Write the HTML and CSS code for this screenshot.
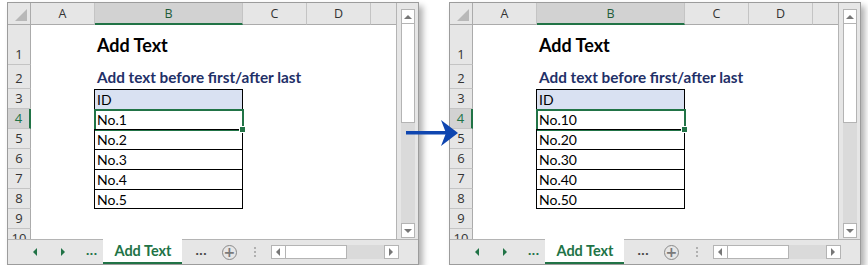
FILE: index.html
```html
<!DOCTYPE html>
<html lang="en">
<head>
<meta charset="UTF-8">
<title>Add Text</title>
<link rel="stylesheet" href="styles.css">
</head>
<body>
<div class="page">

  <div class="win">
    <div class="main">
      <div class="sheet">
        <div class="corner"><span class="tri"></span></div>
        <div class="ch">A</div><div class="ch on">B</div><div class="ch">C</div><div class="ch">D</div><div class="ch end"></div>

        <div class="rh">1</div><div></div><div class="cell title">Add Text</div><div class="rest"></div>
        <div class="rh">2</div><div></div><div class="cell sub">Add text before first/after last</div><div class="rest"></div>
        <div class="rh">3</div><div></div><div class="cell tb head">ID</div><div class="rest"></div>
        <div class="rh on">4</div><div></div><div class="cell tb sel">No.1</div><div class="rest"></div>
        <div class="rh">5</div><div></div><div class="cell tb">No.2</div><div class="rest"></div>
        <div class="rh">6</div><div></div><div class="cell tb">No.3</div><div class="rest"></div>
        <div class="rh">7</div><div></div><div class="cell tb">No.4</div><div class="rest"></div>
        <div class="rh">8</div><div></div><div class="cell tb last">No.5</div><div class="rest"></div>
        <div class="rh">9</div><div></div><div class="cell"></div><div class="rest"></div>
        <div class="rh">10</div><div></div><div class="cell"></div><div class="rest"></div>
      </div>
      <div class="vscroll">
        <div class="sbtn"><span class="up"></span></div>
        <div class="vthumb"></div>
        <div class="vtrack"></div>
        <div class="sbtn"><span class="down"></span></div>
      </div>
    </div>
    <div class="tabs">
      <span class="nav left"></span>
      <span class="nav right"></span>
      <span class="more green">...</span>
      <div class="tab">Add Text</div>
      <span class="more">...</span>
      <span class="plus">+</span>
      <span class="dots"></span>
      <div class="hscroll">
        <div class="hbtn"><span class="left"></span></div>
        <div class="hthumb"></div>
        <div class="htrack"></div>
        <div class="hbtn"><span class="right"></span></div>
      </div>
    </div>
  </div>

  <div class="win">
    <div class="main">
      <div class="sheet">
        <div class="corner"><span class="tri"></span></div>
        <div class="ch">A</div><div class="ch on">B</div><div class="ch">C</div><div class="ch">D</div><div class="ch end"></div>

        <div class="rh">1</div><div></div><div class="cell title">Add Text</div><div class="rest"></div>
        <div class="rh">2</div><div></div><div class="cell sub">Add text before first/after last</div><div class="rest"></div>
        <div class="rh">3</div><div></div><div class="cell tb head">ID</div><div class="rest"></div>
        <div class="rh on">4</div><div></div><div class="cell tb sel">No.10</div><div class="rest"></div>
        <div class="rh">5</div><div></div><div class="cell tb">No.20</div><div class="rest"></div>
        <div class="rh">6</div><div></div><div class="cell tb">No.30</div><div class="rest"></div>
        <div class="rh">7</div><div></div><div class="cell tb">No.40</div><div class="rest"></div>
        <div class="rh">8</div><div></div><div class="cell tb last">No.50</div><div class="rest"></div>
        <div class="rh">9</div><div></div><div class="cell"></div><div class="rest"></div>
        <div class="rh">10</div><div></div><div class="cell"></div><div class="rest"></div>
      </div>
      <div class="vscroll">
        <div class="sbtn"><span class="up"></span></div>
        <div class="vthumb"></div>
        <div class="vtrack"></div>
        <div class="sbtn"><span class="down"></span></div>
      </div>
    </div>
    <div class="tabs">
      <span class="nav left"></span>
      <span class="nav right"></span>
      <span class="more green">...</span>
      <div class="tab">Add Text</div>
      <span class="more">...</span>
      <span class="plus">+</span>
      <span class="dots"></span>
      <div class="hscroll">
        <div class="hbtn"><span class="left"></span></div>
        <div class="hthumb"></div>
        <div class="htrack"></div>
        <div class="hbtn"><span class="right"></span></div>
      </div>
    </div>
  </div>

  <!-- arrow between the two windows -->
  <svg class="arrow" width="62" height="35" viewBox="0 0 62 35">
    <rect x="6" y="16" width="40" height="3.5" fill="#0f46b0"/>
    <polygon points="58,18 41,5 46,18 41,31" fill="#0f46b0"/>
  </svg>
</div>
</body>
</html>
```

FILE: styles.css
```css
body {
    margin: 0;
    background: #fff;
    font-family: Lato, "Open Sans", sans-serif;
}
.page {
    position: relative;
    display: flex;
    gap: 30px;
    padding: 2px 0 0 7px;
}
.win {
    width: 410px;
    height: 261px;
    border: 1px solid #9c9c9c;
    background: #e6e6e6;
    display: flex;
    flex-direction: column;
    box-shadow: 4px 4px 6px rgba(0, 0, 0, 0.3);
}
.main {
    display: flex;
    height: 236px;
}
.sheet {
    width: 389px;
    background: #fff;
    display: grid;
    grid-template-columns: 23px 64px 148px 64px 64px 1fr;
    grid-template-rows: 22px 40px 24px repeat(7, 20px) 1fr;
    overflow: hidden;
    border-right: 1px solid #b4b4b4;
    box-sizing: border-box;
}
.corner {
    background: #e6e6e6;
    border-right: 1px solid #ababab;
    border-bottom: 1px solid #ababab;
    position: relative;
}
.tri {
    position: absolute;
    right: 3px;
    bottom: 3px;
    width: 0;
    height: 0;
    border-left: 12px solid transparent;
    border-bottom: 12px solid #b8b8b8;
}
.ch {
    background: #e6e6e6;
    border-right: 1px solid #c4c4c4;
    border-bottom: 1px solid #ababab;
    font-family: "Open Sans", sans-serif;
    font-size: 12.5px;
    color: #333;
    display: flex;
    align-items: center;
    justify-content: center;
}
.ch.on {
    background: #d2d2d2;
    color: #1e5c3a;
    border-bottom: 2px solid #217346;
}
.ch.end {
    border-right: none;
}
.rh {
    background: #e6e6e6;
    border-right: 1px solid #ababab;
    border-bottom: 1px solid #c4c4c4;
    font-family: "Open Sans", sans-serif;
    font-size: 13px;
    color: #333;
    display: flex;
    align-items: flex-end;
    justify-content: center;
    padding-bottom: 1px;
}
.rh.on {
    background: #d2d2d2;
    color: #217346;
    border-right: 2px solid #217346;
}
.rest {
    grid-column: span 3;
}
.cell {
    font-size: 14px;
    color: #000;
    padding-left: 2px;
    display: flex;
    align-items: center;
    white-space: nowrap;
    position: relative;
}
.title {
    font-size: 18px;
    font-weight: bold;
    align-items: flex-end;
    padding-bottom: 9px;
}
.sub {
    font-size: 15.3px;
    font-weight: bold;
    color: #1f3068;
    align-items: flex-end;
    padding-bottom: 3px;
}
.tb {
    border: 1px solid #000;
    border-bottom: none;
    margin-left: -1px;
}
.tb.last {
    border-bottom: 1px solid #000;
}
.tb.head {
    background: #d9e1f2;
}
.sel::after {
    content: "";
    position: absolute;
    left: -1px;
    top: -1px;
    right: -2px;
    bottom: -2px;
    border: 2px solid #217346;
}
.sel::before {
    content: "";
    position: absolute;
    right: -4px;
    bottom: -4px;
    width: 5px;
    height: 5px;
    background: #217346;
    border: 1px solid #fff;
    z-index: 2;
}
.vscroll {
    flex: 1;
    display: flex;
    flex-direction: column;
    padding: 6px 3px 1px 4px;
}
.sbtn {
    height: 13px;
    background: #fff;
    border: 1px solid #b4b4b4;
    display: flex;
    align-items: center;
    justify-content: center;
}
.vthumb {
    height: 98px;
    background: #fff;
    border: 1px solid #b4b4b4;
    border-top: none;
}
.vtrack {
    flex: 1;
    background: #dadada;
}
.up, .down, .left, .right {
    width: 0;
    height: 0;
}
.up {
    border-left: 4px solid transparent;
    border-right: 4px solid transparent;
    border-bottom: 4px solid #777;
}
.down {
    border-left: 4px solid transparent;
    border-right: 4px solid transparent;
    border-top: 4px solid #777;
}
.left {
    border-top: 4px solid transparent;
    border-bottom: 4px solid transparent;
    border-right: 4px solid #777;
}
.right {
    border-top: 4px solid transparent;
    border-bottom: 4px solid transparent;
    border-left: 4px solid #777;
}
.tabs {
    flex: 1;
    display: flex;
    align-items: center;
    border-top: 1px solid #b4b4b4;
    position: relative;
}
.nav.left {
    margin-left: 25px;
    border-right-color: #217346;
}
.nav.right {
    margin-left: 24px;
    border-left-color: #217346;
}
.more {
    font-weight: bold;
    font-size: 14px;
    color: #444;
    letter-spacing: 0.5px;
    margin-top: -6px;
    margin-left: 13px;
}
.more.green {
    color: #217346;
    margin-left: 21px;
    margin-right: 6px;
}
.tab {
    align-self: stretch;
    width: 79px;
    margin-top: -1px;
    background: #fff;
    border-bottom: 2px solid #217346;
    color: #217346;
    font-weight: bold;
    font-size: 14.5px;
    display: flex;
    align-items: center;
    justify-content: center;
}
.plus {
    margin-left: 15px;
    width: 13px;
    height: 13px;
    border: 1.5px solid #8a8a8a;
    border-radius: 50%;
    color: #7a7a7a;
    font-family: "DejaVu Sans", sans-serif;
    font-weight: bold;
    font-size: 14px;
    line-height: 13px;
    text-align: center;
}
.dots {
    margin-left: 17px;
    width: 2px;
    height: 10px;
    background: repeating-linear-gradient(#b0b0b0 0 2px, transparent 2px 4px);
}
.hscroll {
    margin-left: 15px;
    width: 128px;
    height: 14px;
    display: flex;
}
.hbtn {
    width: 13px;
    background: #fff;
    border: 1px solid #b4b4b4;
    display: flex;
    align-items: center;
    justify-content: center;
}
.hthumb {
    width: 60px;
    background: #fff;
    border: 1px solid #b4b4b4;
    border-left: none;
}
.htrack {
    flex: 1;
    background: #dadada;
}
.arrow {
    position: absolute;
    left: 400px;
    top: 115px;
}
```
